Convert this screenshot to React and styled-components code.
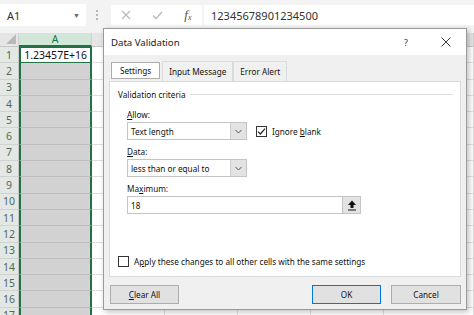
import React from 'react'
import styled, { createGlobalStyle } from 'styled-components'

const GlobalStyle = createGlobalStyle`
    html, body {
        margin: 0;
        padding: 0;
        background: #ffffff;
    }
    body {
        font-family: 'Noto Sans', 'Liberation Sans', sans-serif;
    }
`

const ui = `'Noto Sans', 'Liberation Sans', sans-serif`
const green = '#217346'

const Page = styled('div')`
    position: relative;
    width: 474px;
    height: 315px;
    overflow: hidden;
    background: #ffffff;
`

/* formula bar */
const Bar = styled('div')`
    display: flex;
    align-items: center;
    height: 33px;
    padding-bottom: 3px;
    box-sizing: border-box;
    background: #f3f3f3;
`

const NameBox = styled('div')`
    display: flex;
    align-items: center;
    justify-content: space-between;
    width: 86px;
    height: 22px;
    box-sizing: border-box;
    padding: 0 6px 0 7px;
    background: #ffffff;
    font-family: ${ui};
    font-size: 11px;
    color: #333;
`

const Caret = styled('span')`
    font-size: 7px;
    color: #666;
`

const Grip = styled('div')`
    display: flex;
    flex-direction: column;
    gap: 2px;
    margin: 0 13px 0 10px;
    span {
        width: 2px;
        height: 2px;
        background: #b8b8b8;
    }
`

const ActionBox = styled('div')`
    display: flex;
    align-items: center;
    justify-content: space-around;
    width: 91px;
    height: 20px;
    background: #ffffff;
    margin-right: 2px;
`

const Fx = styled('span')`
    font-family: 'Liberation Serif', serif;
    font-style: italic;
    font-size: 13px;
    color: #555;
    sub {
        font-size: 8px;
        vertical-align: -1px;
    }
`

const Formula = styled('div')`
    flex: 1;
    height: 20px;
    display: flex;
    align-items: center;
    padding-left: 7px;
    background: #ffffff;
    font-family: ${ui};
    font-size: 11px;
    color: #333;
`

/* sheet */
const Sheet = styled('div')`
    display: grid;
    grid-template-columns: 19px 73px repeat(4, 73px) 1fr;
    grid-template-rows: 14px repeat(17, 16.3px);
`

const Corner = styled('div')`
    position: relative;
    background: #e6e6e6;
    border-right: 1px solid #d0d0d0;
    border-bottom: 1px solid #c8c8c8;
    &::after {
        content: '';
        position: absolute;
        right: 2px;
        bottom: 2px;
        border-left: 10px solid transparent;
        border-bottom: 10px solid #b9b9b9;
    }
`

const ColHead = styled('div')`
    display: flex;
    align-items: center;
    justify-content: center;
    box-sizing: border-box;
    font-family: ${ui};
    font-size: 10.5px;
    background: ${p => (p.$active ? '#d3e6da' : '#e6e6e6')};
    color: ${p => (p.$active ? green : '#444')};
    border-right: 1px solid #d0d0d0;
    border-bottom: ${p => (p.$active ? `2px solid ${green}` : '1px solid #c8c8c8')};
`

const RowHead = styled('div')`
    display: flex;
    align-items: center;
    justify-content: center;
    box-sizing: border-box;
    background: #e4e8e5;
    border-right: 1px solid #c8c8c8;
    border-bottom: 1px solid #d0d4d1;
    font-family: ${ui};
    font-size: 10.5px;
    color: #4f6a5b;
`

const Cell = styled('div')`
    box-sizing: border-box;
    border-right: 1px solid #dedede;
    border-bottom: 1px solid #dedede;
`

const SelCell = styled('div')`
    display: flex;
    align-items: center;
    justify-content: flex-end;
    box-sizing: border-box;
    padding-right: 3px;
    background: ${p => (p.$first ? '#ffffff' : '#d2d2d2')};
    border-left: 2px solid ${green};
    border-right: 2px solid ${green};
    border-bottom: 1px solid ${p => (p.$first ? green : '#bcbcbc')};
    border-top: ${p => (p.$first ? `1px solid ${green}` : 'none')};
    font-family: ${ui};
    font-size: 10.5px;
    color: #111;
`

/* dialog */
const Dialog = styled('div')`
    position: absolute;
    left: 103px;
    top: 28px;
    width: 364px;
    height: 282px;
    box-sizing: border-box;
    display: flex;
    flex-direction: column;
    background: #f0f0f0;
    border: 1px solid #9a9a9a;
    box-shadow: 2px 2px 6px rgba(0, 0, 0, 0.25);
    font-family: ${ui};
    font-size: 8.2px;
    color: #111;
`

const TitleBar = styled('div')`
    display: flex;
    align-items: center;
    height: 26px;
    flex-shrink: 0;
    padding-left: 7px;
    background: #ffffff;
    font-size: 9.6px;
    color: #222;
`

const Title = styled('span')`
    flex: 1;
`

const TitleBtn = styled('span')`
    width: 40px;
    display: flex;
    justify-content: center;
    font-size: 9px;
    color: #333;
`

const Body = styled('div')`
    flex: 1;
    display: flex;
    flex-direction: column;
    padding: 5px 5px 6px 5px;
`

const Tabs = styled('div')`
    display: flex;
    align-items: flex-end;
    height: 21px;
    padding-left: 2px;
`

const Tab = styled('div')`
    display: flex;
    align-items: center;
    justify-content: center;
    box-sizing: border-box;
    height: ${p => (p.$active ? '17px' : '20px')};
    margin-bottom: ${p => (p.$active ? '2px' : '0')};
    padding: 0 ${p => (p.$active ? '8px' : '6px')};
    background: ${p => (p.$active ? '#ffffff' : '#f0f0f0')};
    border: 1px solid ${p => (p.$active ? '#adadad' : '#dadada')};
    border-bottom: ${p => (p.$active ? '1px solid #adadad' : 'none')};
    margin-right: ${p => (p.$active ? '2px' : '0')};
`

const Panel = styled('div')`
    height: 196px;
    box-sizing: border-box;
    padding: 6px 7px 0 8px;
    background: #ffffff;
    border: 1px solid #dadada;
    display: flex;
    flex-direction: column;
`

const Group = styled('div')`
    display: flex;
    align-items: center;
    gap: 4px;
    height: 13px;
    &::after {
        content: '';
        flex: 1;
        height: 1px;
        background: #dcdcdc;
    }
`

const Fields = styled('div')`
    display: flex;
    flex-direction: column;
    padding-left: 9px;
    margin-top: 6px;
`

const Label = styled('div')`
    height: 14px;
    display: flex;
    align-items: center;
    margin-bottom: 1px;
    u {
        text-decoration-thickness: 1px;
        text-underline-offset: 1px;
    }
`

const Row = styled('div')`
    display: flex;
    align-items: center;
    margin-bottom: 4px;
`

const Select = styled('div')`
    display: flex;
    width: 120px;
    height: 18px;
    box-sizing: border-box;
    border: 1px solid #c4c4c4;
    background: #ffffff;
`

const SelectText = styled('span')`
    flex: 1;
    display: flex;
    align-items: center;
    padding-left: 3px;
`

const SelectBtn = styled('span')`
    width: 15px;
    display: flex;
    align-items: center;
    justify-content: center;
    background: #e3e3e3;
    border-left: 1px solid #d0d0d0;
`

const CheckRow = styled('label')`
    display: flex;
    align-items: center;
    gap: 5px;
    margin-left: ${p => p.$indent || '0'};
    margin-bottom: ${p => p.$mb || '0'};
    u {
        text-decoration-thickness: 1px;
        text-underline-offset: 1px;
    }
`

const Box = styled('span')`
    width: 11px;
    height: 11px;
    box-sizing: border-box;
    display: flex;
    align-items: center;
    justify-content: center;
    border: 1px solid #333;
    background: #ffffff;
`

const InputRow = styled('div')`
    display: flex;
    height: 18px;
    width: 234px;
`

const Input = styled('div')`
    flex: 1;
    display: flex;
    align-items: center;
    padding-left: 3px;
    box-sizing: border-box;
    border: 1px solid #c4c4c4;
    background: #ffffff;
`

const RangeBtn = styled('span')`
    width: 18px;
    display: flex;
    align-items: center;
    justify-content: center;
    box-sizing: border-box;
    background: #e3e3e3;
    border: 1px solid #c4c4c4;
    border-left: none;
`

const Spacer = styled('div')`
    flex: 1;
`

const Footer = styled('div')`
    display: flex;
    align-items: center;
    margin-top: 8px;
    padding-left: 1px;
`

const Button = styled('div')`
    width: ${p => p.$w || '69px'};
    height: 19px;
    box-sizing: border-box;
    display: flex;
    align-items: center;
    justify-content: center;
    background: #e1e1e1;
    border: 1px solid ${p => (p.$primary ? '#0078d7' : '#adadad')};
    margin-left: ${p => p.$ml || '0'};
    u {
        text-decoration-thickness: 1px;
        text-underline-offset: 1px;
    }
`

const Chevron = () => (
    <svg width="7" height="5" viewBox="0 0 7 5">
        <path d="M0.5 1 L3.5 4 L6.5 1" fill="none" stroke="#555" strokeWidth="1" />
    </svg>
)

const Check = () => (
    <svg width="9" height="9" viewBox="0 0 9 9">
        <path d="M1 4.6 L3.4 7 L8 1.6" fill="none" stroke="#222" strokeWidth="1.2" />
    </svg>
)

const UpArrow = () => (
    <svg width="10" height="11" viewBox="0 0 10 11">
        <path d="M5 0.5 L9 5 H6.5 V8 H3.5 V5 H1 Z" fill="#111" />
        <rect x="1" y="9.5" width="8" height="1" fill="#111" />
    </svg>
)

const CloseIcon = () => (
    <svg width="10" height="10" viewBox="0 0 10 10">
        <path d="M0.5 0.5 L9.5 9.5 M9.5 0.5 L0.5 9.5" stroke="#222" strokeWidth="0.9" />
    </svg>
)

const rows = Array.from({ length: 17 }, (_, i) => i + 1)
const otherCols = ['B', 'C', 'D', 'E', '']

const App = () => (
    <Page>
        <GlobalStyle />
        <Bar>
            <NameBox>
                A1
                <Caret>▼</Caret>
            </NameBox>
            <Grip>
                <span />
                <span />
                <span />
            </Grip>
            <ActionBox>
                <svg width="10" height="10" viewBox="0 0 10 10">
                    <path d="M1 1 L9 9 M9 1 L1 9" stroke="#b8b8b8" strokeWidth="1.2" />
                </svg>
                <svg width="11" height="9" viewBox="0 0 11 9">
                    <path d="M1 4.5 L4 7.5 L10 1" fill="none" stroke="#b8b8b8" strokeWidth="1.3" />
                </svg>
                <Fx>
                    f<sub>x</sub>
                </Fx>
            </ActionBox>
            <Formula>12345678901234500</Formula>
        </Bar>

        <Sheet>
            <Corner />
            <ColHead $active>A</ColHead>
            {otherCols.map((c, i) => (
                <ColHead key={i}>{c}</ColHead>
            ))}
            {rows.map(r => (
                <React.Fragment key={r}>
                    <RowHead>{r}</RowHead>
                    <SelCell $first={r === 1}>{r === 1 ? '1.23457E+16' : ''}</SelCell>
                    {otherCols.map((c, i) => (
                        <Cell key={i} />
                    ))}
                </React.Fragment>
            ))}
        </Sheet>

        <Dialog>
            <TitleBar>
                <Title>Data Validation</Title>
                <TitleBtn>?</TitleBtn>
                <TitleBtn>
                    <CloseIcon />
                </TitleBtn>
            </TitleBar>
            <Body>
                <Tabs>
                    <Tab $active>Settings</Tab>
                    <Tab>Input Message</Tab>
                    <Tab>Error Alert</Tab>
                </Tabs>
                <Panel>
                    <Group>Validation criteria</Group>
                    <Fields>
                        <Label>
                            <span>
                                <u>A</u>llow:
                            </span>
                        </Label>
                        <Row>
                            <Select>
                                <SelectText>Text length</SelectText>
                                <SelectBtn>
                                    <Chevron />
                                </SelectBtn>
                            </Select>
                            <CheckRow $indent="9px">
                                <Box>
                                    <Check />
                                </Box>
                                <span>
                                    Ignore <u>b</u>lank
                                </span>
                            </CheckRow>
                        </Row>
                        <Label>
                            <span>
                                <u>D</u>ata:
                            </span>
                        </Label>
                        <Row>
                            <Select>
                                <SelectText>less than or equal to</SelectText>
                                <SelectBtn>
                                    <Chevron />
                                </SelectBtn>
                            </Select>
                        </Row>
                        <Label>
                            <span>
                                Ma<u>x</u>imum:
                            </span>
                        </Label>
                        <InputRow>
                            <Input>18</Input>
                            <RangeBtn>
                                <UpArrow />
                            </RangeBtn>
                        </InputRow>
                    </Fields>
                    <Spacer />
                    <CheckRow $mb="9px">
                        <Box />
                        <span>
                            A<u>p</u>ply these changes to all other cells with the same settings
                        </span>
                    </CheckRow>
                </Panel>
                <Footer>
                    <Button>
                        <span>
                            <u>C</u>lear All
                        </span>
                    </Button>
                    <Spacer />
                    <Button $primary>OK</Button>
                    <Button $ml="10px" $w="70px">
                        Cancel
                    </Button>
                </Footer>
            </Body>
        </Dialog>
    </Page>
)

export default App
